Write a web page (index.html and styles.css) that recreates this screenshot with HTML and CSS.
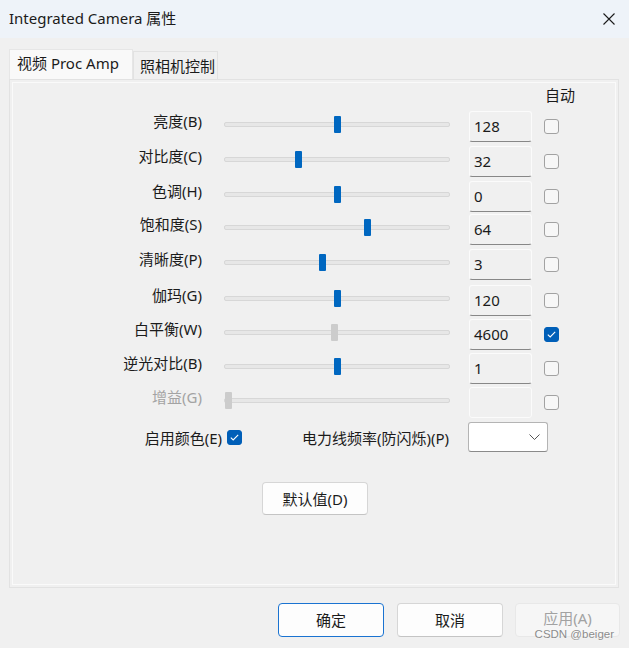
FILE: index.html
```html
<!DOCTYPE html>
<html lang="zh-CN">
<head>
    <meta charset="UTF-8">
    <title>Integrated Camera 属性</title>
    <link rel="stylesheet" href="styles.css">
</head>
<body>
    <div class="window">
        <div class="titlebar">
            <span class="title">Integrated Camera 属性</span>
            <svg class="close" width="12" height="12" viewBox="0 0 12 12"><path d="M0.5 0.5L11.5 11.5M11.5 0.5L0.5 11.5"/></svg>
        </div>
        <div class="tabs">
            <div class="tab active">视频 Proc Amp</div>
            <div class="tab">照相机控制</div>
        </div>
        <div class="panel">
            <div class="auto-head">自动</div>
            <div class="rows">
                <div class="row">
                    <span class="lbl">亮度(B)</span>
                    <div class="slider"><span class="thumb" style="left:109px"></span></div>
                    <div class="edit">128</div>
                    <span class="check"></span>
                </div>
                <div class="row">
                    <span class="lbl">对比度(C)</span>
                    <div class="slider"><span class="thumb" style="left:70px"></span></div>
                    <div class="edit">32</div>
                    <span class="check"></span>
                </div>
                <div class="row">
                    <span class="lbl">色调(H)</span>
                    <div class="slider"><span class="thumb" style="left:109px"></span></div>
                    <div class="edit">0</div>
                    <span class="check"></span>
                </div>
                <div class="row">
                    <span class="lbl">饱和度(S)</span>
                    <div class="slider"><span class="thumb" style="left:139px"></span></div>
                    <div class="edit">64</div>
                    <span class="check"></span>
                </div>
                <div class="row">
                    <span class="lbl">清晰度(P)</span>
                    <div class="slider"><span class="thumb" style="left:94px"></span></div>
                    <div class="edit">3</div>
                    <span class="check"></span>
                </div>
                <div class="row">
                    <span class="lbl">伽玛(G)</span>
                    <div class="slider"><span class="thumb" style="left:109px"></span></div>
                    <div class="edit">120</div>
                    <span class="check"></span>
                </div>
                <div class="row">
                    <span class="lbl">白平衡(W)</span>
                    <div class="slider"><span class="thumb off" style="left:106px"></span></div>
                    <div class="edit">4600</div>
                    <span class="check on"><svg width="9" height="7" viewBox="0 0 9 7"><path d="M0.8 3.6L3.2 5.9L8.2 0.9"/></svg></span>
                </div>
                <div class="row">
                    <span class="lbl">逆光对比(B)</span>
                    <div class="slider"><span class="thumb" style="left:109px"></span></div>
                    <div class="edit">1</div>
                    <span class="check"></span>
                </div>
                <div class="row">
                    <span class="lbl disabled">增益(G)</span>
                    <div class="slider"><span class="thumb off" style="left:0px"></span></div>
                    <div class="edit empty"></div>
                    <span class="check"></span>
                </div>
            </div>
            <div class="options">
                <span class="lbl-color">启用颜色(E)</span>
                <span class="check on"><svg width="9" height="7" viewBox="0 0 9 7"><path d="M0.8 3.6L3.2 5.9L8.2 0.9"/></svg></span>
                <span class="lbl-freq">电力线频率(防闪烁)(P)</span>
                <div class="combo">
                    <svg width="11" height="6" viewBox="0 0 11 6"><path d="M0.5 0.5L5.5 5.5L10.5 0.5"/></svg>
                </div>
            </div>
            <div class="defaults">
                <button class="btn">默认值(D)</button>
            </div>
        </div>
        <div class="actions">
            <button class="btn primary">确定</button>
            <button class="btn">取消</button>
            <button class="btn disabled">应用(A)</button>
        </div>
        <span class="watermark">CSDN @beiger</span>
    </div>
</body>
</html>
```

FILE: styles.css
```css
body {
    margin: 0;
    padding: 0;
    background: #f0f0f0;
}
.window {
    position: relative;
    width: 629px;
    height: 648px;
    overflow: hidden;
    background: #f0f0f0;
    font-family: "Noto Sans", "Noto Sans CJK SC", sans-serif;
    font-size: 15px;
    color: #1b1b1b;
}
.titlebar {
    height: 38px;
    box-sizing: border-box;
    padding: 0 14px 3px 9px;
    display: flex;
    align-items: center;
    justify-content: space-between;
    background: #eef3f9;
}
.title {
    line-height: 20px;
}
.close {
    margin-top: 3px;
}
.close path {
    stroke: #1b1b1b;
    stroke-width: 1.1;
    fill: none;
}
.tabs {
    display: flex;
    align-items: flex-end;
    padding: 11px 0 0 9px;
}
.tab {
    box-sizing: border-box;
    width: 85px;
    height: 28px;
    padding: 1px 0 0 6px;
    line-height: 26px;
    border: 1px solid #e2e2e2;
    border-bottom: none;
    background: #f0f0f0;
    white-space: nowrap;
}
.tab.active {
    width: 124px;
    height: 30px;
    padding: 0 0 0 7px;
    line-height: 27px;
    background: #f9f9f9;
    border-color: #e6e6e6;
}
.panel {
    box-sizing: border-box;
    width: 610px;
    height: 509px;
    margin-left: 9px;
    padding: 5px 0 0 0;
    border: 1px solid #e2e2e2;
    box-shadow: inset 0 0 0 2px #f0f0f0, inset 0 0 0 3px #fafafa;
}
.auto-head {
    margin: 0 0 6px 535px;
    line-height: 20px;
}
.rows {
    display: grid;
    grid-template-rows: 35px 35px 33px 35px 36px 34px 34px 34px 31px;
}
.row {
    display: flex;
    align-items: center;
    height: 31px;
}
.lbl {
    width: 192px;
    text-align: right;
    line-height: 20px;
    margin-bottom: 11px;
    white-space: nowrap;
}
.lbl.disabled {
    color: #a3a3a3;
}
.slider {
    position: relative;
    width: 224px;
    height: 3px;
    margin: 0 0 4px 22px;
    background: #e7e7e7;
    border: 1px solid #d7d7d7;
    border-radius: 2px;
    box-sizing: content-box;
}
.thumb {
    position: absolute;
    top: 50%;
    width: 7px;
    height: 17px;
    margin-top: -8.5px;
    border-radius: 1px;
    background: #0067c0;
}
.thumb.off {
    background: #cccccc;
}
.edit {
    box-sizing: border-box;
    width: 63px;
    height: 31px;
    margin-left: 19px;
    padding: 0 0 1px 4px;
    line-height: 29px;
    background: #f0f0f0;
    border: 1px solid #fbfbfb;
    border-bottom-color: #878787;
    border-radius: 3px;
}
.edit.empty {
    border-bottom-color: #fbfbfb;
}
.check {
    box-sizing: border-box;
    width: 15px;
    height: 15px;
    margin-left: 12px;
    border: 1px solid #a2a2a2;
    border-radius: 3px;
    background: #f7f7f7;
    display: flex;
    align-items: center;
    justify-content: center;
}
.check.on {
    background: #005fb8;
    border-color: #005fb8;
}
.check svg path {
    stroke: #ffffff;
    stroke-width: 1.1;
    fill: none;
}
.options {
    display: flex;
    align-items: center;
    height: 30px;
    margin-top: 4px;
}
.lbl-color {
    width: 212px;
    text-align: right;
    line-height: 20px;
    margin-top: 1px;
    white-space: nowrap;
}
.options .check {
    margin-left: 5px;
}
.lbl-freq {
    margin-left: 60px;
    width: 146px;
    line-height: 20px;
    margin-top: 2px;
    white-space: nowrap;
}
.combo {
    box-sizing: border-box;
    width: 80px;
    height: 30px;
    margin-left: 20px;
    background: #ffffff;
    border: 1px solid #b4b4b4;
    border-bottom-color: #8a8a8a;
    border-radius: 3px;
    display: flex;
    align-items: center;
    justify-content: flex-end;
    padding-right: 7px;
}
.combo path {
    stroke: #555555;
    stroke-width: 1;
    fill: none;
}
.defaults {
    margin: 30px 0 0 252px;
}
.btn {
    box-sizing: border-box;
    width: 106px;
    height: 34px;
    padding: 0;
    font-family: inherit;
    font-size: 15px;
    line-height: 18px;
    color: #1b1b1b;
    background: #fdfdfd;
    border: 1px solid #d6d6d6;
    border-bottom-color: #c4c4c4;
    border-radius: 4px;
}
.defaults .btn {
    height: 33px;
}
.btn.primary {
    border: 1px solid #1a73d1;
}
.btn.disabled {
    width: 105px;
    color: #a2a2a2;
    background: #f6f6f6;
    border-color: #e8e8e8;
    padding-bottom: 4px;
}
.actions {
    display: flex;
    justify-content: flex-end;
    gap: 12px;
    margin-top: 15px;
    padding-right: 9px;
}
.actions .btn.primary {
    margin-right: 1px;
}
.watermark {
    position: absolute;
    right: 15px;
    bottom: 7px;
    font-family: "Liberation Sans", sans-serif;
    font-size: 11.5px;
    line-height: 13px;
    color: #8c8c8c;
    text-shadow: 0 0 2px #ffffff;
}
```
